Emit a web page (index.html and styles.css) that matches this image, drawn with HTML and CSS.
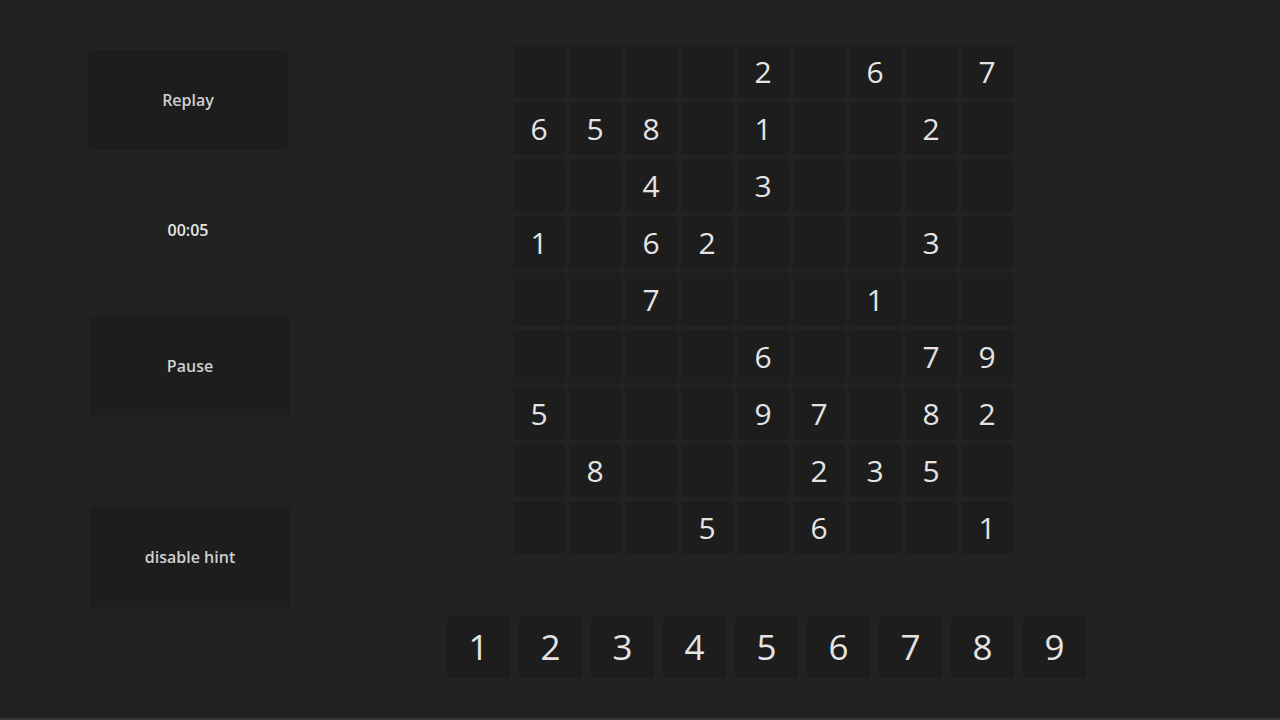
FILE: index.html
```html
<!DOCTYPE html>
<html lang="en">
<head>
<meta charset="utf-8">
<title>Sudoku</title>
<link rel="stylesheet" href="styles.css">
</head>
<body>
<div class="app">
  <aside class="side">
    <button class="btn btn-replay">Replay</button>
    <div class="timer">00:05</div>
    <button class="btn btn-pause">Pause</button>
    <button class="btn btn-hint">disable hint</button>
  </aside>
  <main class="board">
    <div class="grid">
      <div class="cell"></div><div class="cell"></div><div class="cell"></div><div class="cell"></div><div class="cell">2</div><div class="cell"></div><div class="cell">6</div><div class="cell"></div><div class="cell">7</div>
      <div class="cell">6</div><div class="cell">5</div><div class="cell">8</div><div class="cell"></div><div class="cell">1</div><div class="cell"></div><div class="cell"></div><div class="cell">2</div><div class="cell"></div>
      <div class="cell"></div><div class="cell"></div><div class="cell">4</div><div class="cell"></div><div class="cell">3</div><div class="cell"></div><div class="cell"></div><div class="cell"></div><div class="cell"></div>
      <div class="cell">1</div><div class="cell"></div><div class="cell">6</div><div class="cell">2</div><div class="cell"></div><div class="cell"></div><div class="cell"></div><div class="cell">3</div><div class="cell"></div>
      <div class="cell"></div><div class="cell"></div><div class="cell">7</div><div class="cell"></div><div class="cell"></div><div class="cell"></div><div class="cell">1</div><div class="cell"></div><div class="cell"></div>
      <div class="cell"></div><div class="cell"></div><div class="cell"></div><div class="cell"></div><div class="cell">6</div><div class="cell"></div><div class="cell"></div><div class="cell">7</div><div class="cell">9</div>
      <div class="cell">5</div><div class="cell"></div><div class="cell"></div><div class="cell"></div><div class="cell">9</div><div class="cell">7</div><div class="cell"></div><div class="cell">8</div><div class="cell">2</div>
      <div class="cell"></div><div class="cell">8</div><div class="cell"></div><div class="cell"></div><div class="cell"></div><div class="cell">2</div><div class="cell">3</div><div class="cell">5</div><div class="cell"></div>
      <div class="cell"></div><div class="cell"></div><div class="cell"></div><div class="cell">5</div><div class="cell"></div><div class="cell">6</div><div class="cell"></div><div class="cell"></div><div class="cell">1</div>
    </div>
    <div class="pad">
      <button class="key">1</button><button class="key">2</button><button class="key">3</button><button class="key">4</button><button class="key">5</button><button class="key">6</button><button class="key">7</button><button class="key">8</button><button class="key">9</button>
    </div>
  </main>
</div>
</body>
</html>
```
FILE: styles.css
```css
html, body {
  margin: 0;
  padding: 0;
  height: 100%;
  background: #222222;
}

body {
  font-family: "Open Sans", "Noto Sans", sans-serif;
  color: #e2e2e2;
  box-sizing: border-box;
  border-bottom: 2px solid #35383b;
  overflow: hidden;
}

.app {
  display: flex;
  height: 718px;
}

/* left control column */
.side {
  width: 340px;
  display: flex;
  flex-direction: column;
  align-items: flex-start;
  padding-left: 90px;
  box-sizing: border-box;
}

.btn {
  width: 200px;
  height: 100px;
  background: #1d1d1d;
  border: none;
  border-radius: 3px;
  color: #cfcfcf;
  font-family: inherit;
  font-size: 16px;
  font-weight: 600;
  padding: 0;
}

.btn-replay {
  margin-top: 50px;
  margin-left: -2px;
}

.timer {
  width: 196px;
  margin-top: 70px;
  height: 20px;
  line-height: 20px;
  text-align: center;
  font-size: 16px;
  font-weight: 600;
  color: #e6e6e6;
}

.btn-pause {
  margin-top: 76px;
  height: 99px;
}

.btn-hint {
  margin-top: 92px;
}

/* board */
.board {
  display: flex;
  flex-direction: column;
  align-items: flex-start;
  padding-top: 45px;
}

.grid {
  margin-left: 173px;
  display: grid;
  grid-template-columns: repeat(9, 52px);
  grid-template-rows: repeat(9, 53px);
  gap: 4px;
}

.cell {
  background: #1d1d1d;
  border-radius: 3px;
  display: flex;
  align-items: center;
  justify-content: center;
  font-size: 30px;
  color: #e4e4e4;
}

.pad {
  margin-top: 61px;
  margin-left: 107px;
  display: flex;
  gap: 9px;
}

.key {
  width: 63px;
  height: 63px;
  background: #1d1d1d;
  border: none;
  border-radius: 3px;
  color: #e4e4e4;
  font-family: inherit;
  font-size: 35px;
  padding: 0;
}
```
